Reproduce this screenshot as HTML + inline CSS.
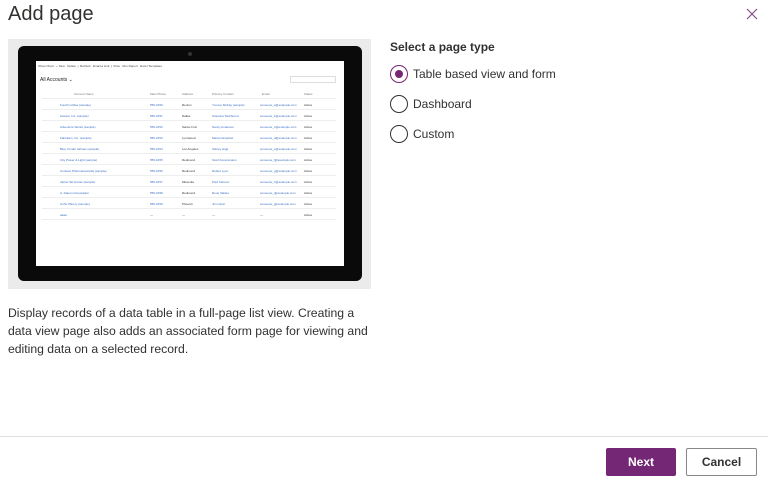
<!DOCTYPE html><html><head><style>
*{margin:0;padding:0;box-sizing:border-box}
body{width:768px;height:482px;background:#fff;font-family:"Liberation Sans",sans-serif;color:#323130;position:relative;overflow:hidden}
.t{position:absolute}
.scr{position:absolute;left:36px;top:61px;width:308px;height:205px;background:#fff;font-size:3px;color:#555}
.row{position:absolute;left:6px;width:294px;height:11px;border-bottom:1px solid #eee}
.row span{position:absolute;top:4px;color:#3a6fc4}
.row b{position:absolute;top:4px;font-weight:normal;color:#333}
.radio{position:absolute;left:390px;width:18px;height:18px;border:1.5px solid #323130;border-radius:50%}
</style></head><body>
<div class="t" style="left:8px;top:3px;font-size:20px;color:#323130">Add page</div>
<svg class="t" style="left:746px;top:8px" width="12" height="12"><path d="M1 1L11 11M11 1L1 11" stroke="#8a4a8c" stroke-width="1.2"/></svg>
<div class="t" style="left:8px;top:39px;width:363px;height:250px;background:#ebebeb"></div>
<div class="t" style="left:18px;top:46px;width:344px;height:235px;background:#0a0a0a;border-radius:6px"></div>
<div class="t" style="left:188px;top:52px;width:4px;height:4px;background:#333;border-radius:50%"></div>
<div class="scr">
<div class="t" style="left:2px;top:3px;width:300px;font-size:3px;color:#444">Show Chart &nbsp; + New &nbsp; Delete &nbsp;|&nbsp; Refresh &nbsp; Email a Link &nbsp;|&nbsp; Flow &nbsp; Run Report &nbsp; Excel Templates</div>
<div class="t" style="left:4px;top:16px;font-size:5px;color:#222">All Accounts ⌄</div>
<div class="t" style="left:254px;top:15px;width:46px;height:7px;border:1px solid #ddd"></div>
<div class="row" style="top:27px;color:#777"><b style="left:32px;color:#777">Account Name</b><b style="left:108px;color:#777">Main Phone</b><b style="left:140px;color:#777">Address</b><b style="left:170px;color:#777">Primary Contact</b><b style="left:220px;color:#777">Email</b><b style="left:262px;color:#777">Status</b></div>
<div class="row" style="top:38px"><span style="left:18px">Fourth Coffee (sample)</span><span style="left:108px">555-0150</span><b style="left:140px">Renton</b><span style="left:170px">Yvonne McKay (sample)</span><span style="left:218px">someone_a@example.com</span><b style="left:262px">Active</b></div>
<div class="row" style="top:49px"><span style="left:18px">Litware, Inc. (sample)</span><span style="left:108px">555-0151</span><b style="left:140px">Dallas</b><span style="left:170px">Susanna Stubberod</span><span style="left:218px">someone_b@example.com</span><b style="left:262px">Active</b></div>
<div class="row" style="top:60px"><span style="left:18px">Adventure Works (sample)</span><span style="left:108px">555-0152</span><b style="left:140px">Santa Cruz</b><span style="left:170px">Nancy Anderson</span><span style="left:218px">someone_c@example.com</span><b style="left:262px">Active</b></div>
<div class="row" style="top:71px"><span style="left:18px">Fabrikam, Inc. (sample)</span><span style="left:108px">555-0153</span><b style="left:140px">Lynnwood</b><span style="left:170px">Maria Campbell</span><span style="left:218px">someone_d@example.com</span><b style="left:262px">Active</b></div>
<div class="row" style="top:82px"><span style="left:18px">Blue Yonder Airlines (sample)</span><span style="left:108px">555-0154</span><b style="left:140px">Los Angeles</b><span style="left:170px">Sidney Higa</span><span style="left:218px">someone_e@example.com</span><b style="left:262px">Active</b></div>
<div class="row" style="top:93px"><span style="left:18px">City Power &amp; Light (sample)</span><span style="left:108px">555-0155</span><b style="left:140px">Redmond</b><span style="left:170px">Scott Konersmann</span><span style="left:218px">someone_f@example.com</span><b style="left:262px">Active</b></div>
<div class="row" style="top:104px"><span style="left:18px">Contoso Pharmaceuticals (sample)</span><span style="left:108px">555-0156</span><b style="left:140px">Redmond</b><span style="left:170px">Robert Lyon</span><span style="left:218px">someone_g@example.com</span><b style="left:262px">Active</b></div>
<div class="row" style="top:115px"><span style="left:18px">Alpine Ski House (sample)</span><span style="left:108px">555-0157</span><b style="left:140px">Missoula</b><span style="left:170px">Paul Cannon</span><span style="left:218px">someone_h@example.com</span><b style="left:262px">Active</b></div>
<div class="row" style="top:126px"><span style="left:18px">A. Datum Corporation</span><span style="left:108px">555-0158</span><b style="left:140px">Redmond</b><span style="left:170px">Rene Valdes</span><span style="left:218px">someone_i@example.com</span><b style="left:262px">Active</b></div>
<div class="row" style="top:137px"><span style="left:18px">Coho Winery (sample)</span><span style="left:108px">555-0159</span><b style="left:140px">Phoenix</b><span style="left:170px">Jim Glynn</span><span style="left:218px">someone_j@example.com</span><b style="left:262px">Active</b></div>
<div class="row" style="top:148px"><span style="left:18px">aaaa</span><b style="left:108px">---</b><b style="left:140px">---</b><b style="left:170px">---</b><b style="left:218px">---</b><b style="left:262px">Active</b></div>
</div>
<div class="t" style="left:8px;top:304px;font-size:12.2px;line-height:18px;color:#323130;white-space:nowrap">Display records of a data table in a full-page list view. Creating a<br>data view page also adds an associated form page for viewing and<br>editing data on a selected record.</div>
<div class="t" style="left:390px;top:40px;font-size:12px;font-weight:bold;color:#323130">Select a page type</div>
<div class="radio" style="top:65px;border-color:#742774"><div style="position:absolute;left:3.5px;top:3.5px;width:8px;height:8px;border-radius:50%;background:#742774"></div></div>
<div class="t" style="left:413px;top:67px;font-size:12px">Table based view and form</div>
<div class="radio" style="top:95px"></div>
<div class="t" style="left:413px;top:97px;font-size:12px">Dashboard</div>
<div class="radio" style="top:125px"></div>
<div class="t" style="left:413px;top:127px;font-size:12px">Custom</div>
<div class="t" style="left:0;top:436px;width:768px;height:1px;background:#e1dfdd"></div>
<div class="t" style="left:606px;top:448px;width:70px;height:28px;background:#742774;border-radius:2px;color:#fff;font-size:12px;font-weight:bold;text-align:center;line-height:28px">Next</div>
<div class="t" style="left:686px;top:448px;width:71px;height:28px;border:1px solid #8a8886;border-radius:2px;font-size:12px;font-weight:bold;text-align:center;line-height:26px">Cancel</div>
</body></html>
